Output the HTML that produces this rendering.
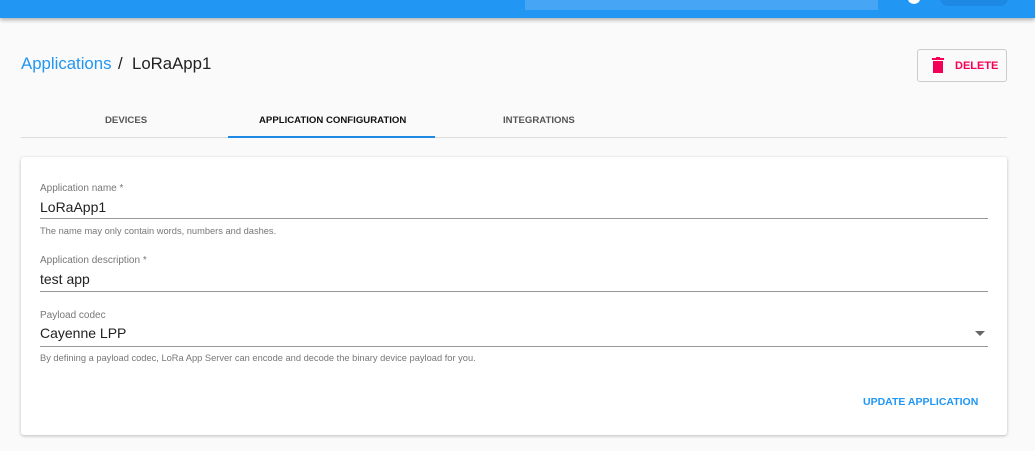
<!DOCTYPE html>
<html><head><style>
*{margin:0;padding:0;box-sizing:border-box}
body{width:1035px;height:451px;background:#fafafa;font-family:"Liberation Sans",sans-serif;position:relative;overflow:hidden}
.a{position:absolute;white-space:nowrap}
.t{font-size:9.6px;font-weight:bold}
</style></head><body>
<div class="a" style="left:0;top:0;width:1035px;height:18px;background:#2196f3;box-shadow:0 2px 4px rgba(0,0,0,.3)"></div>
<div class="a" style="left:525px;top:0;width:353px;height:10px;background:#46a6f5"></div>
<div class="a" style="left:908px;top:-6px;width:12px;height:10px;border-radius:50%;background:#fff"></div>
<div class="a" style="left:940px;top:-10px;width:68px;height:16px;border-radius:8px;background:#1e88e5"></div>

<div class="a" style="left:21px;top:54px;font-size:16.8px;color:#2196f3">Applications</div>
<div class="a" style="left:118px;top:54px;font-size:16.8px;color:#222">/</div>
<div class="a" style="left:132px;top:54px;font-size:16.8px;color:#222">LoRaApp1</div>

<div class="a" style="left:917px;top:49px;width:90px;height:33px;border:1px solid #ccc;border-radius:3px"></div>
<svg class="a" style="left:931px;top:57px" width="14" height="17" viewBox="0 0 14 17"><rect x="1" y="1" width="12" height="2" fill="#f50057"/><rect x="5" y="0" width="4" height="2" fill="#f50057"/><rect x="2" y="4" width="10" height="12" fill="#f50057"/></svg>
<div class="a" style="left:955px;top:60px;font-size:11px;font-weight:bold;color:#f50057">DELETE</div>

<div class="a t" style="left:105px;top:115px;color:#555">DEVICES</div>
<div class="a t" style="left:259px;top:115px;color:#111">APPLICATION CONFIGURATION</div>
<div class="a t" style="left:503px;top:115px;color:#555">INTEGRATIONS</div>
<div class="a" style="left:21px;top:137px;width:986px;height:1px;background:#ddd"></div>
<div class="a" style="left:228px;top:136px;width:207px;height:2px;background:#1e88e5"></div>

<div class="a" style="left:21px;top:157px;width:986px;height:278px;background:#fff;border-radius:3px;box-shadow:0 1px 3px rgba(0,0,0,.25)"></div>

<div class="a" style="left:40px;top:183px;font-size:10px;color:#777">Application name *</div>
<div class="a" style="left:40px;top:199px;font-size:14px;color:#222">LoRaApp1</div>
<div class="a" style="left:40px;top:218px;width:948px;height:1px;background:#999"></div>
<div class="a" style="left:40px;top:226px;font-size:9.3px;color:#777">The name may only contain words, numbers and dashes.</div>

<div class="a" style="left:40px;top:255px;font-size:10px;color:#777">Application description *</div>
<div class="a" style="left:40px;top:271px;font-size:14px;color:#222">test app</div>
<div class="a" style="left:40px;top:291px;width:948px;height:1px;background:#999"></div>

<div class="a" style="left:40px;top:310px;font-size:10px;color:#777">Payload codec</div>
<div class="a" style="left:40px;top:325px;font-size:14px;color:#222">Cayenne LPP</div>
<svg class="a" style="left:975px;top:331px" width="10" height="5"><path d="M0 0h10L5 5z" fill="#666"/></svg>
<div class="a" style="left:40px;top:346px;width:948px;height:1px;background:#999"></div>
<div class="a" style="left:40px;top:353px;font-size:9.3px;color:#777">By defining a payload codec, LoRa App Server can encode and decode the binary device payload for you.</div>

<div class="a" style="left:863px;top:396px;font-size:10.5px;font-weight:bold;color:#2196f3">UPDATE APPLICATION</div>
</body></html>
